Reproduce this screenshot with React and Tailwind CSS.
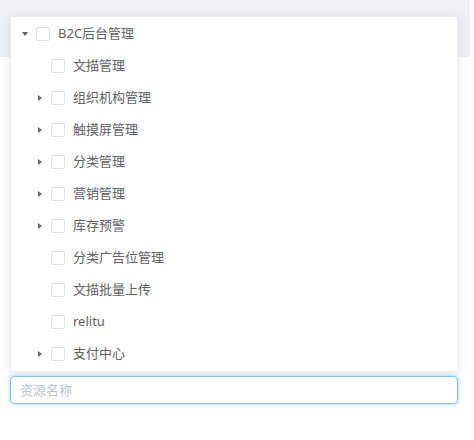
import { useState } from "react";

const tree = [
  {
    label: "B2C后台管理",
    open: true,
    children: [
      { label: "文描管理" },
      { label: "组织机构管理", children: [] },
      { label: "触摸屏管理", children: [] },
      { label: "分类管理", children: [] },
      { label: "营销管理", children: [] },
      { label: "库存预警", children: [] },
      { label: "分类广告位管理" },
      { label: "文描批量上传" },
      { label: "relitu" },
      { label: "支付中心", children: [] },
    ],
  },
];

function Caret({ open }) {
  if (open) {
    return (
      <span className="w-0 h-0 border-x-[3px] border-x-transparent border-t-[4px] border-t-[#606266]" />
    );
  }
  return (
    <span className="w-0 h-0 border-y-[3px] border-y-transparent border-l-[4px] border-l-[#606266]" />
  );
}

function Node({ node, level }) {
  const hasKids = !!node.children;
  const pad = level === 0 ? "pl-[7px]" : "pl-[22px]";
  return (
    <>
      <div className={`flex items-center h-8 ${pad}`}>
        <span className="w-[14px] flex items-center justify-center">
          {hasKids && <Caret open={node.open} />}
        </span>
        <span className="ml-[4px] w-[14px] h-[14px] border border-[#dcdfe6] rounded-[2px] bg-white" />
        <span className="ml-[8px] text-[13px] text-[#606266]">{node.label}</span>
      </div>
      {node.open &&
        node.children.map((c, i) => <Node key={i} node={c} level={level + 1} />)}
    </>
  );
}

export default function App() {
  const [q, setQ] = useState("");

  return (
    <div
      className="relative h-[440px] bg-white pl-[10px] pr-[16px] pt-[16px]"
      style={{ fontFamily: '"Noto Sans", "Noto Sans CJK SC", sans-serif' }}
    >
      <div className="absolute top-0 left-0 w-[470px] h-[57px] bg-[#eff0f4]" />

      <div className="relative bg-white border border-[#eceef2] rounded-[2px] shadow-[0_2px_12px_rgba(0,0,0,0.1)] py-[1px]">
        {tree.map((n, i) => (
          <Node key={i} node={n} level={0} />
        ))}
      </div>

      <input
        className="relative mt-[4px] block w-full h-[28px] px-[9px] text-[13px] text-[#606266] placeholder:text-[#c0c4cc] border border-[#86c0f2] rounded-[4px] outline-none shadow-[0_0_3px_1px_rgba(64,158,255,0.3)]"
        placeholder="资源名称"
        value={q}
        onChange={(e) => setQ(e.target.value)}
      />
    </div>
  );
}
